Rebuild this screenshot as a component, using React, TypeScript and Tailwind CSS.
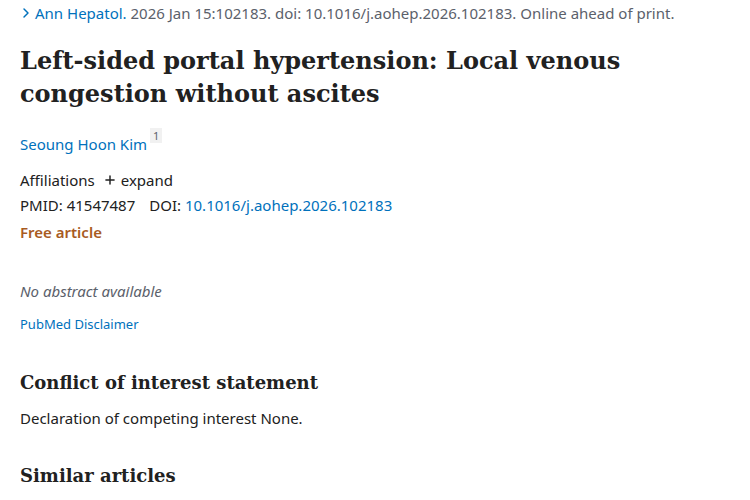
import { ChevronRight, Plus } from "lucide-react";

const sans = "font-['Segoe_UI','Noto_Sans',sans-serif]";
const serif = "font-['DejaVu_Serif',serif]";

export default function App() {
  return (
    <main className={`w-[750px] h-[500px] overflow-hidden bg-white px-5 ${sans} text-[#212121]`}>
      <div className="flex items-center h-[26px] text-[15px] text-[#5b616b]">
        <ChevronRight className="w-4 h-4 text-[#0071bc] -ml-0.5 mr-[1px]" strokeWidth={2.2} />
        <span className="text-[#0071bc]">Ann Hepatol.</span>
        <span>&nbsp;2026 Jan 15:102183. doi: 10.1016/j.aohep.2026.102183. Online ahead of print.</span>
      </div>

      <h1 className={`${serif} font-bold text-[24px] leading-[33px] mt-[18px] text-[#212121]`}>
        Left-sided portal hypertension: Local venous congestion without ascites
      </h1>

      <div className="mt-[23px] flex items-start text-[15px] text-[#0071bc]">
        <span>Seoung Hoon Kim</span>
        <span className="ml-[3px] mt-[-5px] bg-[#f1f1f1] text-[#5b616b] text-[11px] px-[3px] leading-[15px]">1</span>
      </div>

      <div className="mt-[13px] flex items-center text-[15px]">
        <span>Affiliations</span>
        <Plus className="w-[14px] h-[14px] ml-2 mr-1" strokeWidth={2.5} />
        <span>expand</span>
      </div>

      <div className="mt-[3px] text-[15px]">
        PMID: 41547487<span className="ml-[14px]">DOI: </span>
        <span className="text-[#0071bc]">10.1016/j.aohep.2026.102183</span>
      </div>

      <div className="mt-[4px] text-[15px] font-semibold text-[#a85b1f]">Free article</div>

      <div className="mt-[37px] text-[15px] italic text-[#5b616b]">No abstract available</div>

      <div className="mt-[12px] text-[13px] text-[#0071bc]">PubMed Disclaimer</div>

      <h2 className={`${serif} font-bold text-[18px] mt-[35px]`}>Conflict of interest statement</h2>

      <p className="mt-[11px] text-[15px]">Declaration of competing interest None.</p>

      <h2 className={`${serif} font-bold text-[18px] mt-[32px]`}>Similar articles</h2>
    </main>
  );
}
